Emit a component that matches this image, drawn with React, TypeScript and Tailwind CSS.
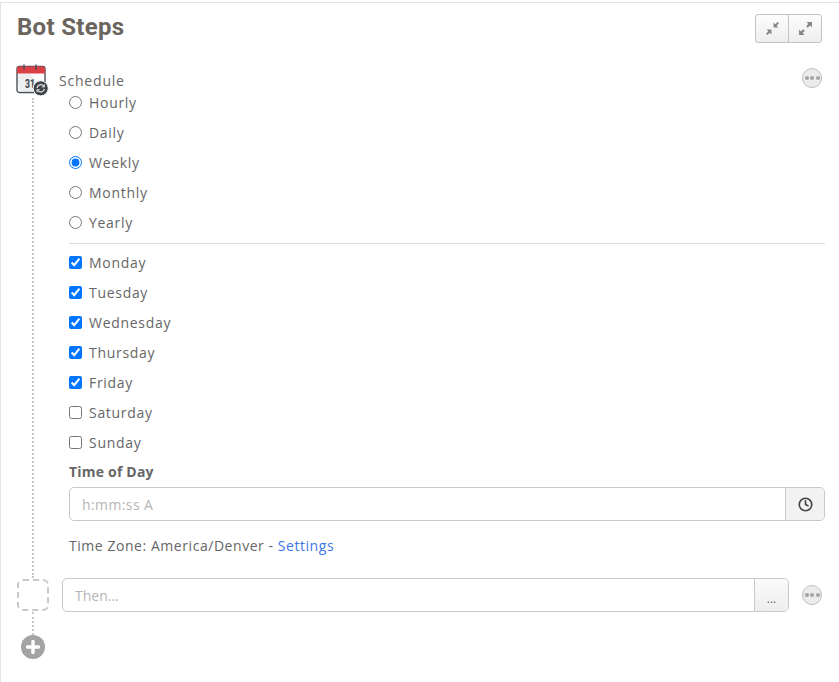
import { Clock } from "lucide-react";

const font = "font-['Open_Sans','Liberation_Sans',sans-serif]";

const frequencies = ["Hourly", "Daily", "Weekly", "Monthly", "Yearly"];
const days = [
  { name: "Monday", on: true },
  { name: "Tuesday", on: true },
  { name: "Wednesday", on: true },
  { name: "Thursday", on: true },
  { name: "Friday", on: true },
  { name: "Saturday", on: false },
  { name: "Sunday", on: false },
];

function CalendarIcon() {
  return (
    <svg width="34" height="34" viewBox="0 0 34 34" className="-mt-[1px] block">
      <rect x="1" y="2.5" width="28" height="26" rx="2.5" fill="#fff" stroke="#4b5256" strokeWidth="1.4" />
      <path d="M2 18 L2 9.5 L14 9.5 L28 26 L4 27.5 Z" fill="#eceef0" />
      <path d="M1 9.5 V5 A2.5 2.5 0 0 1 3.5 2.5 H26.5 A2.5 2.5 0 0 1 29 5 V9.5 Z" fill="#dc3f45" />
      <path d="M8 0.5 V6 M20 0.5 V6" stroke="#4b5256" strokeWidth="1.4" />
      <text x="9" y="24" fontSize="12" fontWeight="700" fill="#3c4245" fontFamily="'Roboto',sans-serif" textLength="10" lengthAdjust="spacingAndGlyphs">31</text>
      <circle cx="24.7" cy="24.3" r="7.6" fill="#3f4649" stroke="#fff" strokeWidth="1" />
      <path d="M21 24 A3.8 3.8 0 0 1 27.8 22.2 M28.4 24.8 A3.8 3.8 0 0 1 21.6 26.4" fill="none" stroke="#e5e7e8" strokeWidth="1.2" />
      <path d="M28.4 20.4 V22.9 H25.9 M21 28.2 V25.7 H23.5" fill="none" stroke="#e5e7e8" strokeWidth="1" />
    </svg>
  );
}

function MoreButton() {
  return (
    <div className="flex h-5 w-5 items-center justify-center gap-[1.5px] rounded-full border border-[#bdbdbd] bg-[#ececec]">
      <span className="h-[4px] w-[4px] rounded-full bg-[#a3a3a3]" />
      <span className="h-[4px] w-[4px] rounded-full bg-[#a3a3a3]" />
      <span className="h-[4px] w-[4px] rounded-full bg-[#a3a3a3]" />
    </div>
  );
}

function Option({ type, label, checked }: { type: string; label: string; checked: boolean }) {
  return (
    <label className="flex h-[30px] items-center gap-[7px] text-[14px] tracking-[0.7px] text-[#666]">
      <input type={type} name={type === "radio" ? "freq" : label} defaultChecked={checked} className="m-0 h-[13px] w-[13px] accent-[#0075ff]" />
      {label}
    </label>
  );
}

export default function App() {
  return (
    <div className={`${font} flex h-[682px] w-[839px] flex-col overflow-hidden bg-white`}>
      <div className="mt-[2px] flex flex-1 flex-col border-t border-l border-[#e4e4e4] pr-[14px] pl-[16px]">
        <header className="flex h-[50px] items-center justify-between">
          <h1 className="-mt-[2px] font-['Roboto',sans-serif] text-[24px] font-bold tracking-[0.3px] text-[#6b6560]">Bot Steps</h1>
          <div className="mr-[3px] flex h-[29px] w-[67px] rounded-[3px] border border-[#c4c4c4] bg-gradient-to-b from-[#fcfcfc] to-[#efefef]">
            <button className="flex flex-1 items-center justify-center border-r border-[#c4c4c4]">
              <svg width="15" height="15" viewBox="0 0 14 14" fill="#858585">
                <path d="M8 1.5 L9.6 3.1 L11.8 1 L13 2.2 L10.9 4.4 L12.5 6 H8 Z" />
                <path d="M6 12.5 L4.4 10.9 L2.2 13 L1 11.8 L3.1 9.6 L1.5 8 H6 Z" />
              </svg>
            </button>
            <button className="flex flex-1 items-center justify-center">
              <svg width="15" height="15" viewBox="0 0 14 14" fill="#858585">
                <path d="M13 1 V6 L11.3 4.3 L9.2 6.4 L7.6 4.8 L9.7 2.7 L8 1 Z" />
                <path d="M1 13 V8 L2.7 9.7 L4.8 7.6 L6.4 9.2 L4.3 11.3 L6 13 Z" />
              </svg>
            </button>
          </div>
        </header>

        <div className="mt-[12px] flex h-[513px]">
          <div className="flex w-[34px] flex-col items-center pr-[2px]">
            <CalendarIcon />
            <div className="flex-1 border-l-2 border-dotted border-[#c8c8c8]" />
          </div>
          <div className="min-w-0 flex-1">
            <div className="flex items-start justify-between pl-[8px]">
              <span className="mt-[6px] text-[14px] leading-[20px] tracking-[0.8px] text-[#666]">Schedule</span>
              <div className="mt-[3px] mr-[3px]"><MoreButton /></div>
            </div>
            <div className="-mt-[4px] pl-[18px]">
              <div className="border-b border-[#dcdcdc] pb-[6px]">
                {frequencies.map((f) => (
                  <Option key={f} type="radio" label={f} checked={f === "Weekly"} />
                ))}
              </div>
              <div className="mt-[3px]">
                {days.map((d) => (
                  <Option key={d.name} type="checkbox" label={d.name} checked={d.on} />
                ))}
              </div>
              <div className="mt-[5px] text-[14px] leading-[20px] font-bold tracking-[0.2px] text-[#666]">Time of Day</div>
              <div className="mt-[5px] flex h-[34px] rounded-[5px] border border-[#c9c9c9]">
                <input placeholder="h:mm:ss A" className="min-w-0 flex-1 bg-transparent px-3 text-[14px] tracking-[0.4px] text-[#666] outline-none placeholder:text-[#b5b5b5]" />
                <div className="flex w-[39px] items-center justify-center rounded-r-[5px] border-l border-[#c9c9c9] bg-[#f2f2f2]">
                  <Clock size={15} strokeWidth={2.6} className="text-[#444]" />
                </div>
              </div>
              <p className="mt-[15px] text-[14px] leading-[20px] tracking-[0.55px] text-[#666]">
                Time Zone: America/Denver - <span className="text-[#3b78e7]">Settings</span>
              </p>
            </div>
          </div>
        </div>

        <div className="flex h-[34px] items-center">
          <div className="h-[32px] w-[32px] rounded-[6px] border-2 border-dashed border-[#c8c8c8]" />
          <div className="ml-[13px] flex h-[34px] w-[727px] rounded-[5px] border border-[#c9c9c9]">
            <input placeholder="Then..." className="min-w-0 flex-1 bg-transparent px-3 text-[14px] text-[#666] outline-none placeholder:text-[#b5b5b5]" />
            <button className="flex w-[34px] items-end justify-center rounded-r-[5px] border-l border-[#c9c9c9] bg-gradient-to-b from-[#fafafa] to-[#eeeeee] pb-[6px] text-[12px] leading-none text-[#666]">...</button>
          </div>
          <div className="ml-[13px]"><MoreButton /></div>
        </div>

        <div className="flex w-[32px] flex-col items-center">
          <div className="h-[23px] border-l-2 border-dotted border-[#c8c8c8]" />
          <div className="flex h-6 w-6 items-center justify-center rounded-full bg-[#a3a3a5]">
            <svg width="14" height="14" viewBox="0 0 14 14"><path d="M7 1.5 V12.5 M1.5 7 H12.5" stroke="#fff" strokeWidth="3.4" strokeLinecap="round" /></svg>
          </div>
        </div>
      </div>
    </div>
  );
}
